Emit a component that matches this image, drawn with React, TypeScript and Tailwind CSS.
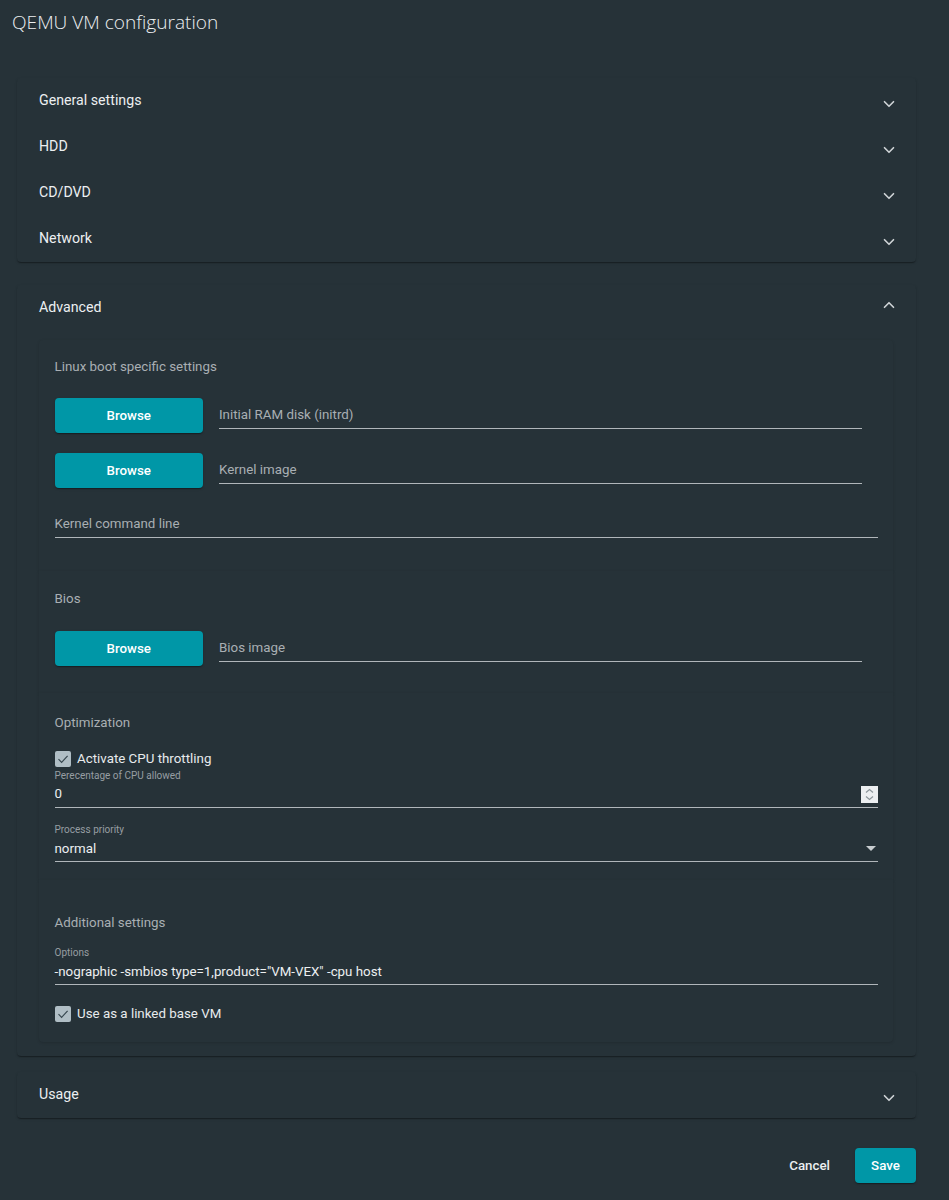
import { ChevronDown, ChevronUp } from "lucide-react";

const cardShadow = "shadow-[0_2px_1px_-1px_rgba(0,0,0,0.2),0_1px_1px_0_rgba(0,0,0,0.14),0_1px_3px_0_rgba(0,0,0,0.12)]";
const sectionShadow = "bg-[#263238] shadow-[0_1px_3px_0_rgba(0,0,0,0.14)]";

const AccordionRow = ({ title, open = false }: { title: string; open?: boolean }) => (
  <div className="flex h-[46px] items-center justify-between pl-[22px] pr-[18px]">
    <span className="pb-[1px] text-[14.2px] text-[#eceff1]">{title}</span>
    {open ? (
      <ChevronUp className="mb-[6px] size-[18px] text-[#cfd4d7]" strokeWidth={2.2} />
    ) : (
      <ChevronDown className="mt-[6px] size-[18px] text-[#cfd4d7]" strokeWidth={2.2} />
    )}
  </div>
);

const BrowseRow = ({ label, className = "" }: { label: string; className?: string }) => (
  <div className={`flex items-start gap-4 pr-[16px] ${className}`}>
    <button className={`h-[35px] w-[148.5px] shrink-0 rounded bg-[#0097a7] text-[13.33px] font-medium text-white ${cardShadow}`}>
      Browse
    </button>
    <div className="h-[31px] flex-1 border-b border-[#b0b6ba] pt-[8px] text-[13.33px] leading-[18px] text-[#a9afb3]">{label}</div>
  </div>
);

const SectionTitle = ({ children }: { children: string }) => (
  <div className="text-[13.33px] leading-[18px] text-[#a9afb3]">{children}</div>
);

const Check = ({ label }: { label: string }) => (
  <label className="flex h-4 items-center gap-[6.5px] text-[13.33px] text-[#e8ebed]">
    <span className="flex size-4 items-center justify-center rounded-[2px] bg-[#b0bec5]">
      <svg viewBox="0 0 16 16" className="size-4" fill="none" stroke="#37474f" strokeWidth="1.2">
        <path d="M3.5 8.2 6.6 11.3 12.6 4.8" />
      </svg>
    </span>
    {label}
  </label>
);

const Field = ({ label, value, gap = "pt-[4px] pb-[3px]", children }: { label: string; value: string; gap?: string; children?: React.ReactNode }) => (
  <div className="relative border-b border-[#b0b6ba]">
    <div className="text-[10px] leading-[12px] text-[#979ea3]">{label}</div>
    <div className={`text-[13.33px] leading-[18px] text-[#eceff1] ${gap}`}>{value}</div>
    {children}
  </div>
);

export default function App() {
  return (
    <div className="min-h-[1200px] bg-[#263238] font-['Roboto',sans-serif]">
      <h1 className="h-[78px] pl-3 pt-[7px] font-['Open_Sans',sans-serif] text-[19.1px] leading-[30px] font-light text-[#eceff1]">
        QEMU VM configuration
      </h1>

      <div className="pl-[17px] pr-[33px]">
        <div className={`rounded ${cardShadow}`}>
          <AccordionRow title="General settings" />
          <AccordionRow title="HDD" />
          <AccordionRow title="CD/DVD" />
          <AccordionRow title="Network" />
        </div>

        <div className={`mt-[23px] rounded pb-[14px] ${cardShadow}`}>
          <AccordionRow title="Advanced" open />
          <div className="ml-[22px] mr-[23px] mt-[9px]">
            <div className={`rounded-t pl-[15.5px] pr-[15px] pt-[18px] pb-[33px] ${sectionShadow}`}>
              <SectionTitle>Linux boot specific settings</SectionTitle>
              <BrowseRow label="Initial RAM disk (initrd)" className="mt-[22px]" />
              <BrowseRow label="Kernel image" className="mt-[20px]" />
              <div className="h-[50px] border-b border-[#b0b6ba] pt-[27px] text-[13.33px] leading-[18px] text-[#a9afb3]">
                Kernel command line
              </div>
            </div>

            <div className={`pl-[15.5px] pr-[15px] pt-[19px] pb-[27px] ${sectionShadow}`}>
              <SectionTitle>Bios</SectionTitle>
              <BrowseRow label="Bios image" className="mt-[23px]" />
            </div>

            <div className={`pl-[15.5px] pr-[15px] pt-[21px] pb-[18px] ${sectionShadow}`}>
              <SectionTitle>Optimization</SectionTitle>
              <div className="mt-[19px]">
                <Check label="Activate CPU throttling" />
              </div>
              <div className="mt-[3px]">
                <Field label="Perecentage of CPU allowed" value="0" gap="pt-[3px] pb-[4px]">
                  <div className="absolute right-0 bottom-[4px] flex h-[17px] w-[17px] flex-col items-center justify-center bg-[#eceff1]">
                    <svg viewBox="0 0 17 17" className="size-[17px]" fill="none" stroke="#8d979c" strokeWidth="1.2">
                      <path d="M5 6.5 8.5 3.5 12 6.5M5 10.5 8.5 13.5 12 10.5" />
                    </svg>
                  </div>
                </Field>
              </div>
              <div className="mt-[16px]">
                <Field label="Process priority" value="normal">
                  <span className="absolute right-[2px] bottom-[10px] size-0 border-x-[5px] border-t-[5px] border-x-transparent border-t-[#c8cdd0]" />
                </Field>
              </div>
            </div>

            <div className={`rounded-b pl-[15.5px] pr-[15px] pt-[34px] pb-[20px] ${sectionShadow}`}>
              <SectionTitle>Additional settings</SectionTitle>
              <div className="mt-[15px]">
                <Field label="Options" value={'-nographic -smbios type=1,product="VM-VEX" -cpu host'} />
              </div>
              <div className="mt-[21px]">
                <Check label="Use as a linked base VM" />
              </div>
            </div>
          </div>
        </div>

        <div className={`mt-4 rounded ${cardShadow}`}>
          <AccordionRow title="Usage" />
        </div>

        <div className="mt-[30px] flex items-center justify-end">
          <button className="mr-[25px] text-[13.33px] font-medium text-[#eceff1]">Cancel</button>
          <button className={`h-[35px] w-[61px] rounded bg-[#0097a7] text-[13.33px] font-medium text-white ${cardShadow}`}>Save</button>
        </div>
      </div>
    </div>
  );
}
